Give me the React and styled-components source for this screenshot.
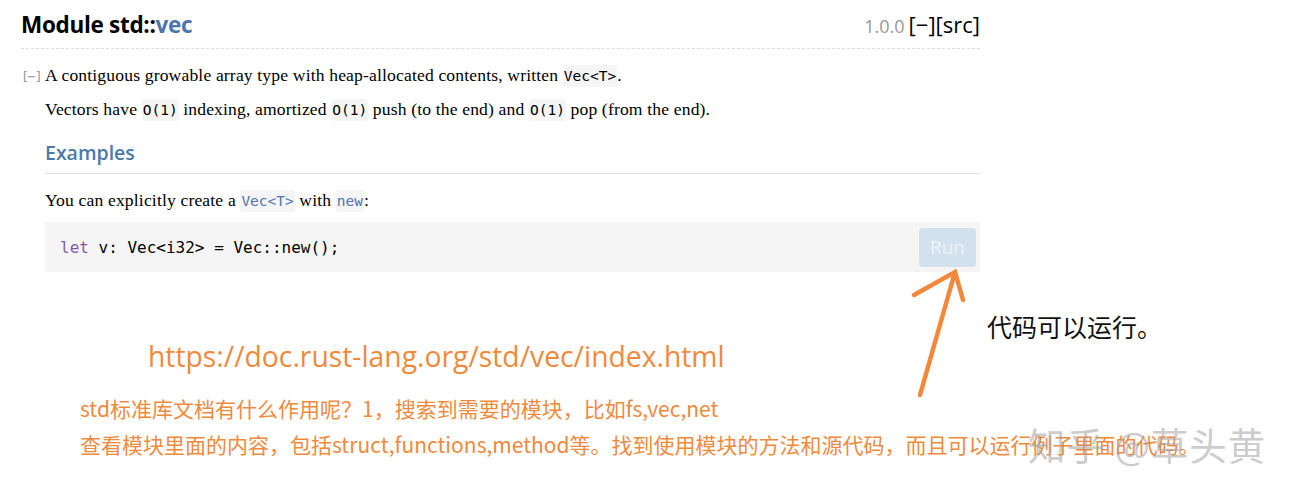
import React from "react";
import styled, { createGlobalStyle } from "styled-components";

const Global = createGlobalStyle`
  html, body { margin: 0; padding: 0; background: #fff; }
  body { width: 1301px; height: 501px; overflow: hidden; }
`;

const Page = styled.div`
  position: relative;
  width: 1301px;
  height: 501px;
  background: #fff;
  padding: 0 0 0 21px;
  box-sizing: border-box;
`;

const Doc = styled.main`
  width: 959px;
  display: flex;
  flex-direction: column;
`;

const TitleBar = styled.header`
  display: flex;
  align-items: baseline;
  justify-content: space-between;
  padding-top: 9px;
  padding-bottom: 7px;
  border-bottom: 1px dashed #dddddd;
`;

const Title = styled.h1`
  margin: 0;
  font-family: "Open Sans", "Noto Sans", sans-serif;
  font-weight: 700;
  font-size: 22.5px;
  letter-spacing: -0.3px;
  color: #000;
  line-height: 32px;
  span { color: #4d76ae; }
`;

const Out = styled.div`
  font-family: "Open Sans", "Noto Sans", sans-serif;
  display: flex;
  align-items: baseline;
  gap: 4px;
`;

const Version = styled.span`
  font-size: 18px;
  color: #999;
`;

const Bracket = styled.span`
  font-size: 22px;
  color: #000;
`;

const Para = styled.p`
  margin: ${(p) => p.$mt || 0}px 0 0 ${(p) => (p.$toggle ? 0 : 24)}px;
  font-family: "Liberation Serif", "Times New Roman", serif;
  font-size: 17.6px;
  letter-spacing: 0.15px;
  line-height: 22px;
  color: #000;
  display: flex;
  align-items: baseline;
  white-space: pre;
`;

const Toggle = styled.span`
  font-family: "DejaVu Sans Mono", monospace;
  font-size: 13px;
  color: #999;
  width: 24px;
  letter-spacing: -1px;
`;

const Code = styled.code`
  font-family: "DejaVu Sans Mono", monospace;
  font-size: 14.5px;
  letter-spacing: 0;
  background: #f5f5f5;
  padding: 0 1px;
  border-radius: 3px;
  color: ${(p) => (p.$link ? "#4d76ae" : "#000")};
`;

const Body = styled.section`
  margin-left: 24px;
  display: flex;
  flex-direction: column;
`;

const H2 = styled.h2`
  margin: 19px 0 0 0;
  font-family: "Open Sans", "Noto Sans", sans-serif;
  font-weight: 600;
  font-size: 19.5px;
  color: #4a7aa8;
  line-height: 26px;
  padding-bottom: 7px;
  border-bottom: 1px solid #dddddd;
`;

const BodyPara = styled(Para)`
  margin-left: 0;
`;

const Pre = styled.pre`
  margin: 10px 0 0 0;
  height: 50px;
  background: #f5f5f5;
  display: flex;
  align-items: center;
  justify-content: space-between;
  padding: 0 4px 0 15px;
  font-family: "DejaVu Sans Mono", monospace;
  font-size: 16px;
  color: #000;
  box-sizing: border-box;
`;

const Kw = styled.span`
  color: #8959a8;
`;

const RunBtn = styled.button`
  width: 57px;
  height: 39px;
  border: none;
  border-radius: 4px;
  background: #d3e1ee;
  color: #edf2f8;
  font-family: "Open Sans", "Noto Sans", sans-serif;
  font-size: 19px;
  padding: 0;
`;

const Notes = styled.section`
  margin-top: 64px;
  display: flex;
  flex-direction: column;
  font-family: "Microsoft YaHei", "Noto Sans CJK SC", sans-serif;
  color: #ef8a3d;
`;

const Url = styled.div`
  margin-left: 127px;
  font-size: 28.3px;
  line-height: 40px;
  font-family: "Open Sans", "Noto Sans CJK SC", sans-serif;
`;

const Note = styled.div`
  margin: ${(p) => (p.$first ? 14 : 0)}px 0 0 59px;
  font-size: 21px;
  line-height: 36px;
  white-space: nowrap;
`;

const Callout = styled.div`
  position: absolute;
  left: 987px;
  top: 308px;
  font-family: "Noto Sans CJK SC", sans-serif;
  font-size: 25px;
  color: #111;
`;

const Arrow = styled.svg`
  position: absolute;
  left: 900px;
  top: 260px;
`;

const Watermark = styled.div`
  position: absolute;
  left: 1028px;
  top: 419px;
  font-family: "Noto Sans CJK SC", sans-serif;
  font-size: 37.5px;
  line-height: 50px;
  color: rgba(160, 160, 160, 0.55);
  letter-spacing: 1px;
`;

export default function App() {
  return (
    <>
      <Global />
      <Page>
        <Doc>
          <TitleBar>
            <Title>
              Module std::<span>vec</span>
            </Title>
            <Out>
              <Version>1.0.0</Version>
              <Bracket>[−][src]</Bracket>
            </Out>
          </TitleBar>
          <Para $toggle $mt={15}>
            <Toggle>[−]</Toggle>A contiguous growable array type with heap-allocated contents, written <Code>Vec&lt;T&gt;</Code>.
          </Para>
          <Para $mt={10}>
            Vectors have <Code>O(1)</Code> indexing, amortized <Code>O(1)</Code> push (to the end) and <Code>O(1)</Code> pop (from the end).
          </Para>
          <Body>
            <H2>Examples</H2>
            <BodyPara $mt={15}>
              You can explicitly create a <Code $link>Vec&lt;T&gt;</Code> with <Code $link>new</Code>:
            </BodyPara>
            <Pre>
              <span>
                <Kw>let</Kw> v: Vec&lt;i32&gt; = Vec::new();
              </span>
              <RunBtn>Run</RunBtn>
            </Pre>
          </Body>
        </Doc>
        <Notes>
          <Url>https://doc.rust-lang.org/std/vec/index.html</Url>
          <Note $first>std标准库文档有什么作用呢？1，搜索到需要的模块，比如fs,vec,net</Note>
          <Note>查看模块里面的内容，包括struct,functions,method等。找到使用模块的方法和源代码，而且可以运行例子里面的代码。</Note>
        </Notes>
        <Callout>代码可以运行。</Callout>
        <Arrow width="80" height="150" viewBox="0 0 80 150">
          <g stroke="#f2883a" strokeWidth="4.5" strokeLinecap="round" fill="none">
            <path d="M20 135 L55 12" />
            <path d="M14 35 L55 12 L63 40" />
          </g>
        </Arrow>
        <Watermark>知乎 @草头黄</Watermark>
      </Page>
    </>
  );
}
